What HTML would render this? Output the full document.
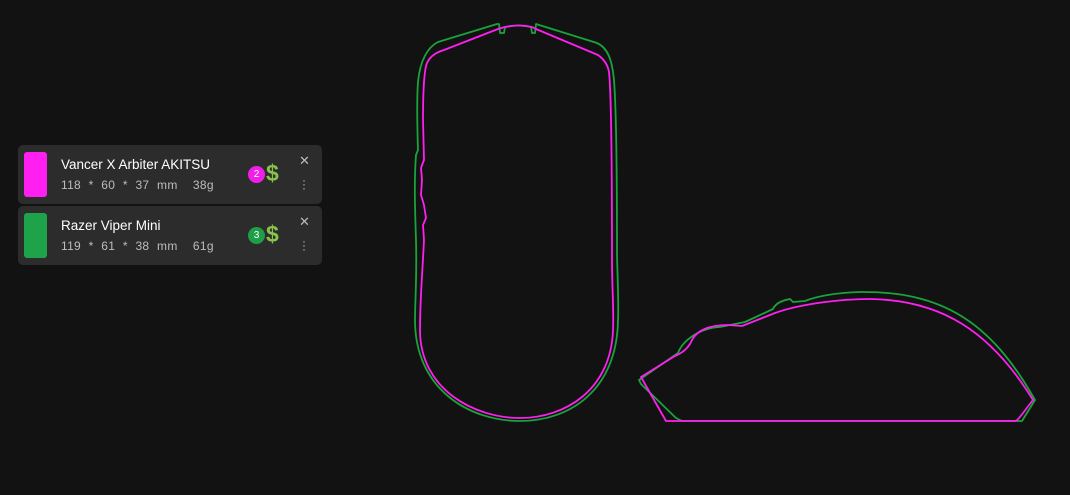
<!DOCTYPE html>
<html><head><meta charset="utf-8"><style>
html,body{margin:0;padding:0;background:#121212;width:1070px;height:495px;overflow:hidden;font-family:"Liberation Sans",sans-serif;}
.card{position:absolute;left:18px;width:304px;height:59px;background:#2c2c2c;border-radius:5px;}
.sw{position:absolute;left:6px;top:7px;width:23px;height:45px;border-radius:3px;}
.t{position:absolute;left:43px;top:12px;color:#fff;font-size:13.5px;letter-spacing:0px;}
.s{position:absolute;left:43px;top:33px;color:#bdbdbd;font-size:12px;word-spacing:4px;letter-spacing:0.3px;white-space:pre}
.b{position:absolute;left:230px;top:21px;width:17px;height:17px;border-radius:50%;color:#fff;font-size:10px;text-align:center;line-height:17px;}
.d{position:absolute;left:248px;top:15px;color:#8bc34a;font-size:23px;font-weight:bold;}
.x{position:absolute;left:281px;top:8px;color:#bbb;font-size:13px;}
.m{position:absolute;left:284px;top:33px;color:#bbb;font-size:12px;line-height:4px;width:3px;}
</style></head><body>
<div class="card" style="top:145px">
<div class="sw" style="background:#ff1ff0"></div>
<div class="t">Vancer X Arbiter AKITSU</div>
<div class="s">118 * 60 * 37 mm  38g</div>
<div class="b" style="background:#f01fe8">2</div><div class="d">$</div>
<div class="x">✕</div><div class="m">·<br>·<br>·</div>
</div>
<div class="card" style="top:206px">
<div class="sw" style="background:#1fa34a"></div>
<div class="t">Razer Viper Mini</div>
<div class="s">119 * 61 * 38 mm  61g</div>
<div class="b" style="background:#1f9e48">3</div><div class="d">$</div>
<div class="x">✕</div><div class="m">·<br>·<br>·</div>
</div>
<svg width="1070" height="495" style="position:absolute;left:0;top:0" fill="none" stroke-width="1.8" stroke-linejoin="round">
<path stroke="#1aa33a" d="M497,24 L499,24 L500,33 L504,33 L505,27 C515,25 522,25 531,27 L532,33 L535,33 L536,24 L597,43 C608,48 612,60 614,80 C617,120 617,200 617,250 C617,270 619,300 618,320 C617,390 570,421 520,421 C470,421 415,390 415,320 C415,300 417,280 416,240 C415,210 414,180 416,155 L418,150 C417,120 417,95 418,82 C420,60 428,47 438,42 Z"/>
<path stroke="#ff1ff0" d="M498,29 L505,27 C515,25 522,25 532,27 L536,29 L598,55 C605,60 608,66 609,72 C612,100 612,200 612,260 C612,290 614,310 613,330 C611,390 565,418 520,418 C475,418 420,390 420,330 C420,300 422,280 424,240 L423,225 L426,218 L424,205 L421,195 L422,180 L421,168 L424,160 L423,120 C423,90 424,75 426,66 C428,58 434,53 444,50 Z"/>
<path stroke="#1aa33a" d="M639,380 L678,353 C683,340 700,328 720,327 L745,322 L773,309 C776,302 785,300 790,299 L793,302 L805,301 C815,297 830,293 860,292 C940,291 990,320 1035,400 L1022,421 L682,421 L676,418 L641,384 Z"/>
<path stroke="#ff1ff0" d="M641,377 L675,356 C685,352 690,345 692,340 C697,330 710,325 728,325 L742,326 L775,313 C800,304 840,299 870,299 C940,300 990,330 1033,400 C1025,410 1020,418 1016,421 L666,421 L641,377 Z"/>
</svg>
</body></html>
